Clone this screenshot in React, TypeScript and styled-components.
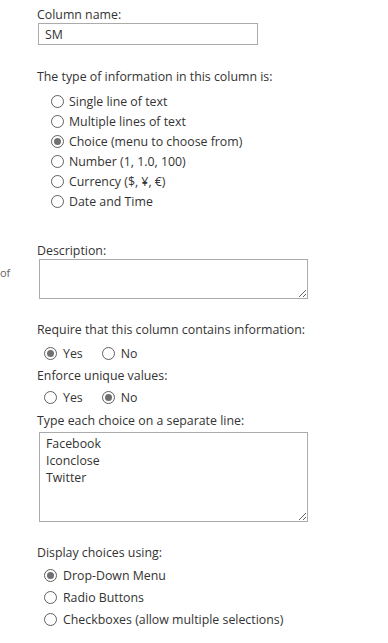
import React from "react";
import styled, { createGlobalStyle } from "styled-components";

const Global = createGlobalStyle`
  html, body { margin: 0; padding: 0; background: #fff; }
  body { font-family: "Open Sans", "Noto Sans", sans-serif; font-size: 12.35px; color: #333; }
`;

const Page = styled.div`
  display: grid;
  grid-template-columns: 37px 1fr;
  padding-top: 6px;
`;

const Side = styled.div<{ $top: number }>`
  grid-column: 1;
  padding-top: ${(p) => p.$top}px;
  color: #666;
  font-size: 11px;
  line-height: 17px;
  overflow: hidden;
  white-space: nowrap;
`;

const Main = styled.div`
  grid-column: 2;
  display: flex;
  flex-direction: column;
`;

const Section = styled.div<{ $mt?: number }>`
  display: flex;
  flex-direction: column;
  margin-top: ${(p) => p.$mt ?? 0}px;
`;

const Label = styled.div<{ $mt?: number }>`
  line-height: 17px;
  margin-top: ${(p) => p.$mt ?? 0}px;
  white-space: nowrap;
`;

const TextInput = styled.input`
  box-sizing: border-box;
  width: 220px;
  height: 22px;
  margin: 0 0 0 1px;
  padding: 0 6px;
  border: 1px solid #ababab;
  font: inherit;
  color: #333;
  outline: none;
`;

const Area = styled.textarea<{ $h: number; $mt?: number }>`
  box-sizing: border-box;
  width: 269px;
  height: ${(p) => p.$h}px;
  margin: ${(p) => p.$mt ?? 0}px 0 0 2px;
  padding: 2px 6px;
  border: 1px solid #ababab;
  font: inherit;
  line-height: 17px;
  color: #333;
  outline: none;
`;

const Group = styled.div<{ $indent: number; $mt?: number }>`
  display: flex;
  flex-direction: column;
  padding-left: ${(p) => p.$indent}px;
  margin-top: ${(p) => p.$mt ?? 0}px;
`;

const Inline = styled.div<{ $mt?: number }>`
  display: flex;
  gap: 19px;
  padding-left: 7px;
  margin-top: ${(p) => p.$mt ?? 0}px;
`;

const Option = styled.label<{ $h: number; $gap: number }>`
  display: flex;
  align-items: center;
  gap: ${(p) => p.$gap}px;
  height: ${(p) => p.$h}px;
  white-space: nowrap;
`;

const Circle = styled.span<{ $on?: boolean }>`
  box-sizing: border-box;
  width: 13px;
  height: 13px;
  border-radius: 50%;
  border: 1px solid #5f5f5f;
  background: #fff;
  display: flex;
  align-items: center;
  justify-content: center;
  flex: none;
  &::after {
    content: "";
    width: 7px;
    height: 7px;
    border-radius: 50%;
    background: ${(p) => (p.$on ? "#707070" : "transparent")};
  }
`;

type Opt = { text: string; on?: boolean };

function Radio({ text, on, h, gap }: Opt & { h: number; gap: number }) {
  return (
    <Option $h={h} $gap={gap}>
      <Circle $on={on} />
      <span>{text}</span>
    </Option>
  );
}

const types: Opt[] = [
  { text: "Single line of text" },
  { text: "Multiple lines of text" },
  { text: "Choice (menu to choose from)", on: true },
  { text: "Number (1, 1.0, 100)" },
  { text: "Currency ($, ¥, €)" },
  { text: "Date and Time" },
];

const display: Opt[] = [
  { text: "Drop-Down Menu", on: true },
  { text: "Radio Buttons" },
  { text: "Checkboxes (allow multiple selections)" },
];

export default function App() {
  return (
    <>
      <Global />
      <Page>
        <Side $top={258}>of</Side>
        <Main>
          <Section>
            <Label>Column name:</Label>
            <TextInput defaultValue="SM" />
          </Section>
          <Section $mt={23}>
            <Label>The type of information in this column is:</Label>
            <Group $indent={14} $mt={6}>
              {types.map((t) => (
                <Radio key={t.text} {...t} h={20} gap={5} />
              ))}
            </Group>
          </Section>
          <Section $mt={31}>
            <Label>Description:</Label>
            <Area $h={40} />
          </Section>
          <Section $mt={22}>
            <Label>Require that this column contains information:</Label>
            <Inline $mt={5}>
              <Radio text="Yes" on h={20} gap={6} />
              <Radio text="No" h={20} gap={6} />
            </Inline>
            <Label $mt={4}>Enforce unique values:</Label>
            <Inline $mt={3}>
              <Radio text="Yes" h={20} gap={6} />
              <Radio text="No" on h={20} gap={6} />
            </Inline>
            <Label $mt={5}>Type each choice on a separate line:</Label>
            <Area $h={90} $mt={3} defaultValue={"Facebook\nIconclose\nTwitter"} />
          </Section>
          <Section $mt={22}>
            <Label>Display choices using:</Label>
            <Group $indent={7} $mt={3}>
              {display.map((t) => (
                <Radio key={t.text} {...t} h={22} gap={6} />
              ))}
            </Group>
          </Section>
        </Main>
      </Page>
    </>
  );
}
